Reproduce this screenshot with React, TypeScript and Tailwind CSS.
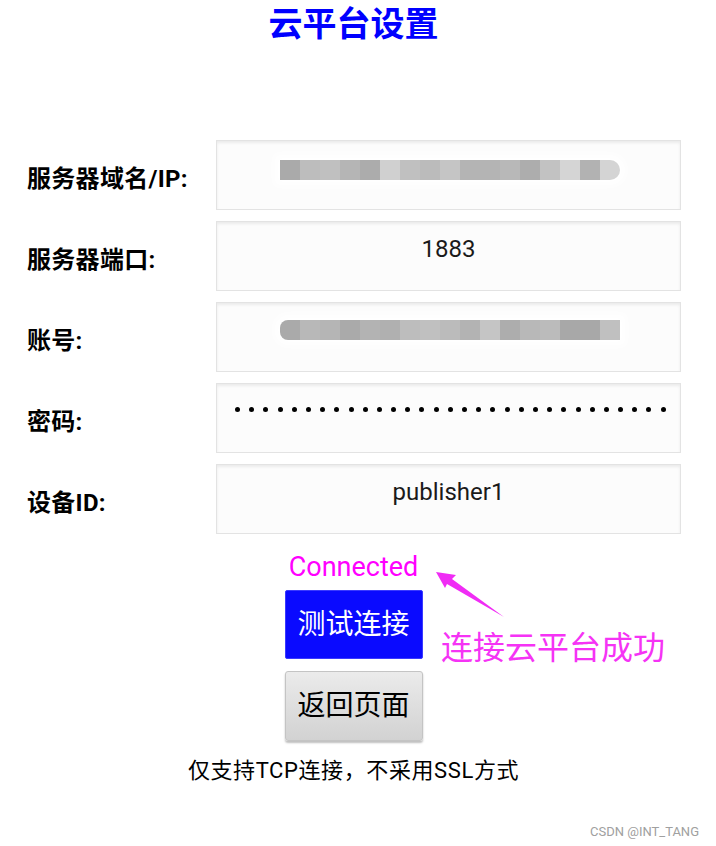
import React from "react";

const FONT = "font-['Roboto','Noto_Sans_CJK_SC',sans-serif]";

const blocks1 = ["#aaaaaa","#bdbdbd","#c0c0c0","#b5b5b5","#acacac","#d0d0d0","#c0c0c0","#bbbbbb","#c5c5c5","#b4b4b4","#b4b4b4","#b8b8b8","#adadad","#c2c2c2","#d5d5d5","#b2b2b2","#d4d4d4"];
const blocks3 = ["#aaaaaa","#b8b8b8","#b5b5b5","#aaaaaa","#b3b3b3","#b0b0b0","#bdbdbd","#c0c0c0","#bbbbbb","#b3b3b3","#c5c5c5","#adadad","#b8b8b8","#bbbbbb","#a8a8a8","#a8a8a8","#c0c0c0"];

function Pixels({ colors, roundRight }: { colors: string[]; roundRight?: boolean }) {
  return (
    <div className={`flex h-[20px] w-[340px] overflow-hidden shadow-[0_0_8px_6px_rgba(255,255,255,0.9)] ${roundRight ? "rounded-r-[10px]" : "rounded-l-[8px]"}`}>
      {colors.map((c, i) => (
        <div key={i} className="h-[20px] w-[20px] shrink-0" style={{ backgroundColor: c }} />
      ))}
    </div>
  );
}

function Field({ label, children, pt }: { label: string; children: React.ReactNode; pt: string }) {
  return (
    <div className="flex h-[70px]">
      <div className="flex w-[216px] items-center pl-[27px] pt-[8px] text-[24px] font-bold leading-[30px] tracking-[0.3px] text-black">
        {label}
      </div>
      <div className={`h-[70px] w-[465px] border border-[#e3e3e3] bg-[#fcfcfc] shadow-[inset_0_2px_3px_rgba(0,0,0,0.07)] ${pt}`}>
        {children}
      </div>
    </div>
  );
}

export default function App() {
  return (
    <div className={`relative h-[846px] w-[716px] overflow-hidden bg-white ${FONT}`}>
      <div className="flex w-[707px] flex-col items-center">
        <div className="pt-[4px] text-[34px] font-bold leading-[40px] text-[#0000ff]">云平台设置</div>
      </div>

      <div className="mt-[96px] flex flex-col gap-[11px]">
        <Field label="服务器域名/IP:" pt="pt-[19px] pl-[63px]">
          <Pixels colors={blocks1} roundRight />
        </Field>
        <Field label="服务器端口:" pt="pt-[13px]">
          <div className="text-center text-[24px] leading-[28px] text-[#1a1a1a]">1883</div>
        </Field>
        <Field label="账号:" pt="pt-[17px] pl-[63px]">
          <Pixels colors={blocks3} />
        </Field>
        <Field label="密码:" pt="pt-[23px] pl-[18px]">
          <div className="flex gap-[9.2px]">
            {Array.from({ length: 31 }).map((_, i) => (
              <div key={i} className="h-[5px] w-[5px] shrink-0 rounded-full bg-black" />
            ))}
          </div>
        </Field>
        <Field label="设备ID:" pt="pt-[13px]">
          <div className="text-center text-[24px] leading-[28px] text-[#1a1a1a]">publisher1</div>
        </Field>
      </div>

      <div className="flex w-[707px] flex-col items-center">
        <div className="mt-[18px] text-[27px] leading-[30px] text-[#ff00ff]">Connected</div>
        <div className="mt-[8px] flex h-[69px] w-[138px] items-center justify-center rounded-[2px] border border-[#3a3aff] bg-[#0a0aff] text-[28px] text-white">
          测试连接
        </div>
        <div className="mt-[12px] flex h-[70px] w-[138px] items-center justify-center rounded-[3px] border border-[#c4c4c4] bg-gradient-to-b from-[#ebebeb] to-[#d2d2d2] text-[28px] text-black shadow-[0_2px_2px_rgba(0,0,0,0.25)]">
          返回页面
        </div>
        <div className="mt-[16px] text-[22px] leading-[28px] tracking-[0.6px] text-black">仅支持TCP连接，不采用SSL方式</div>
      </div>

      {/* annotation overlay */}
      <svg className="absolute left-0 top-0" width="716" height="846" viewBox="0 0 716 846">
        <polygon
          points="436,572 456,575 452,579 504,617 447,584 445,588"
          fill="#f02cf5"
        />
      </svg>
      <div className="absolute left-[441px] top-[628px] text-[32px] leading-[40px] text-[#f533f5]">连接云平台成功</div>
      <div className="absolute left-[590px] top-[824px] text-[13px] leading-[16px] text-[#a0a0a0]">CSDN @INT_TANG</div>
    </div>
  );
}
